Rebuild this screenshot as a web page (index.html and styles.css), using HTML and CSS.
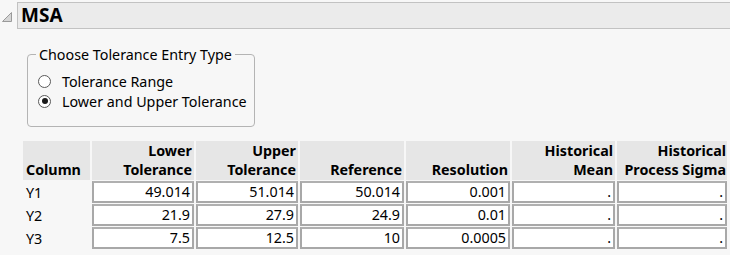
FILE: index.html
```html
<!DOCTYPE html>
<html lang="en">
<head>
    <meta charset="UTF-8">
    <title>MSA</title>
    <link rel="stylesheet" href="styles.css">
</head>
<body>
    <div class="outline">
        <div class="title-row">
            <svg class="toggle" width="10" height="10" viewBox="0 0 10 10">
                <path d="M9.5 0.5 L9.5 9.5 L0.5 9.5 Z" fill="#d6d6d6" stroke="#9a9a9a" stroke-width="1"/>
            </svg>
            <div class="title-bar">MSA</div>
        </div>

        <div class="content">
            <fieldset class="group">
                <legend>Choose Tolerance Entry Type</legend>
                <label class="radio"><span class="dot"></span>Tolerance Range</label>
                <label class="radio"><span class="dot on"></span>Lower and Upper Tolerance</label>
            </fieldset>

            <table class="grid">
                <colgroup>
                    <col class="c-name">
                    <col class="c-102">
                    <col class="c-102">
                    <col class="c-104">
                    <col class="c-104">
                    <col class="c-103">
                    <col class="c-110">
                </colgroup>
                <thead>
                    <tr>
                        <th class="first">Column</th>
                        <th>Lower<br>Tolerance</th>
                        <th>Upper<br>Tolerance</th>
                        <th>Reference</th>
                        <th>Resolution</th>
                        <th>Historical<br>Mean</th>
                        <th>Historical<br>Process Sigma</th>
                    </tr>
                </thead>
                <tbody>
                    <tr>
                        <td class="name">Y1</td>
                        <td><div class="cell">49.014</div></td>
                        <td><div class="cell">51.014</div></td>
                        <td><div class="cell">50.014</div></td>
                        <td><div class="cell">0.001</div></td>
                        <td><div class="cell">.</div></td>
                        <td><div class="cell">.</div></td>
                    </tr>
                    <tr>
                        <td class="name">Y2</td>
                        <td><div class="cell">21.9</div></td>
                        <td><div class="cell">27.9</div></td>
                        <td><div class="cell">24.9</div></td>
                        <td><div class="cell">0.01</div></td>
                        <td><div class="cell">.</div></td>
                        <td><div class="cell">.</div></td>
                    </tr>
                    <tr>
                        <td class="name">Y3</td>
                        <td><div class="cell">7.5</div></td>
                        <td><div class="cell">12.5</div></td>
                        <td><div class="cell">10</div></td>
                        <td><div class="cell">0.0005</div></td>
                        <td><div class="cell">.</div></td>
                        <td><div class="cell">.</div></td>
                    </tr>
                </tbody>
            </table>
        </div>
    </div>
</body>
</html>
```

FILE: styles.css
```css
html,
body {
    margin: 0;
    background: #f7f7f7;
    font-family: "Noto Sans", "Open Sans", sans-serif;
    font-size: 14.3px;
    color: #000;
}

.outline {
    padding-top: 2px;
}

.title-row {
    display: flex;
    align-items: center;
    gap: 5px;
    padding-left: 2px;

    .toggle {
        flex-shrink: 0;
        margin-top: 2px;
    }

    .title-bar {
        flex: 1;
        height: 25px;
        line-height: 25px;
        background: #ebebeb;
        border-top: 1px solid #c2c2c2;
        border-bottom: 1px solid #c2c2c2;
        border-left: 1px solid #c2c2c2;
        padding-left: 3px;
        font-size: 19px;
        font-weight: bold;
    }
}

.content {
    padding: 16px 0 0 23px;
}

.group {
    box-sizing: border-box;
    width: 228px;
    margin: 0 0 13px 4px;
    padding: 7px 6px 15px 10px;
    border: 1px solid #b4b4b4;
    border-radius: 4px;

    legend {
        padding: 0 3px;
        margin-left: -2px;
    }

    .radio {
        display: flex;
        align-items: center;
        gap: 11px;
        height: 20px;
        white-space: nowrap;
    }

    .dot {
        width: 11px;
        height: 11px;
        border: 1px solid #5a5a5a;
        border-radius: 50%;
        background: #fff;
        position: relative;
    }

    .dot.on::after {
        content: "";
        position: absolute;
        left: 2.5px;
        top: 2.5px;
        width: 6px;
        height: 6px;
        border-radius: 50%;
        background: #1a1a1a;
    }
}

.grid {
    border-collapse: separate;
    border-spacing: 2px 1px;
    margin-left: -2px;
    table-layout: fixed;

    .c-name { width: 67px; }
    .c-102 { width: 102px; }
    .c-103 { width: 103px; }
    .c-104 { width: 104px; }
    .c-110 { width: 110px; }

    th {
        background: #e6e6e6;
        font-weight: bold;
        text-align: right;
        vertical-align: bottom;
        line-height: 19px;
        padding: 0 2px 1px 2px;
        height: 37px;
        white-space: nowrap;
    }

    th.first {
        text-align: left;
        padding-left: 3px;
    }

    th:last-child {
        padding-right: 1px;
    }

    td {
        padding: 0;
    }

    td.name {
        padding-left: 3px;
    }

    .cell {
        background: #fff;
        border: 2px solid #a8a8a8;
        border-top-color: #b0b0b0;
        height: 18px;
        line-height: 18px;
        text-align: right;
        padding-right: 2px;
    }
}
```
